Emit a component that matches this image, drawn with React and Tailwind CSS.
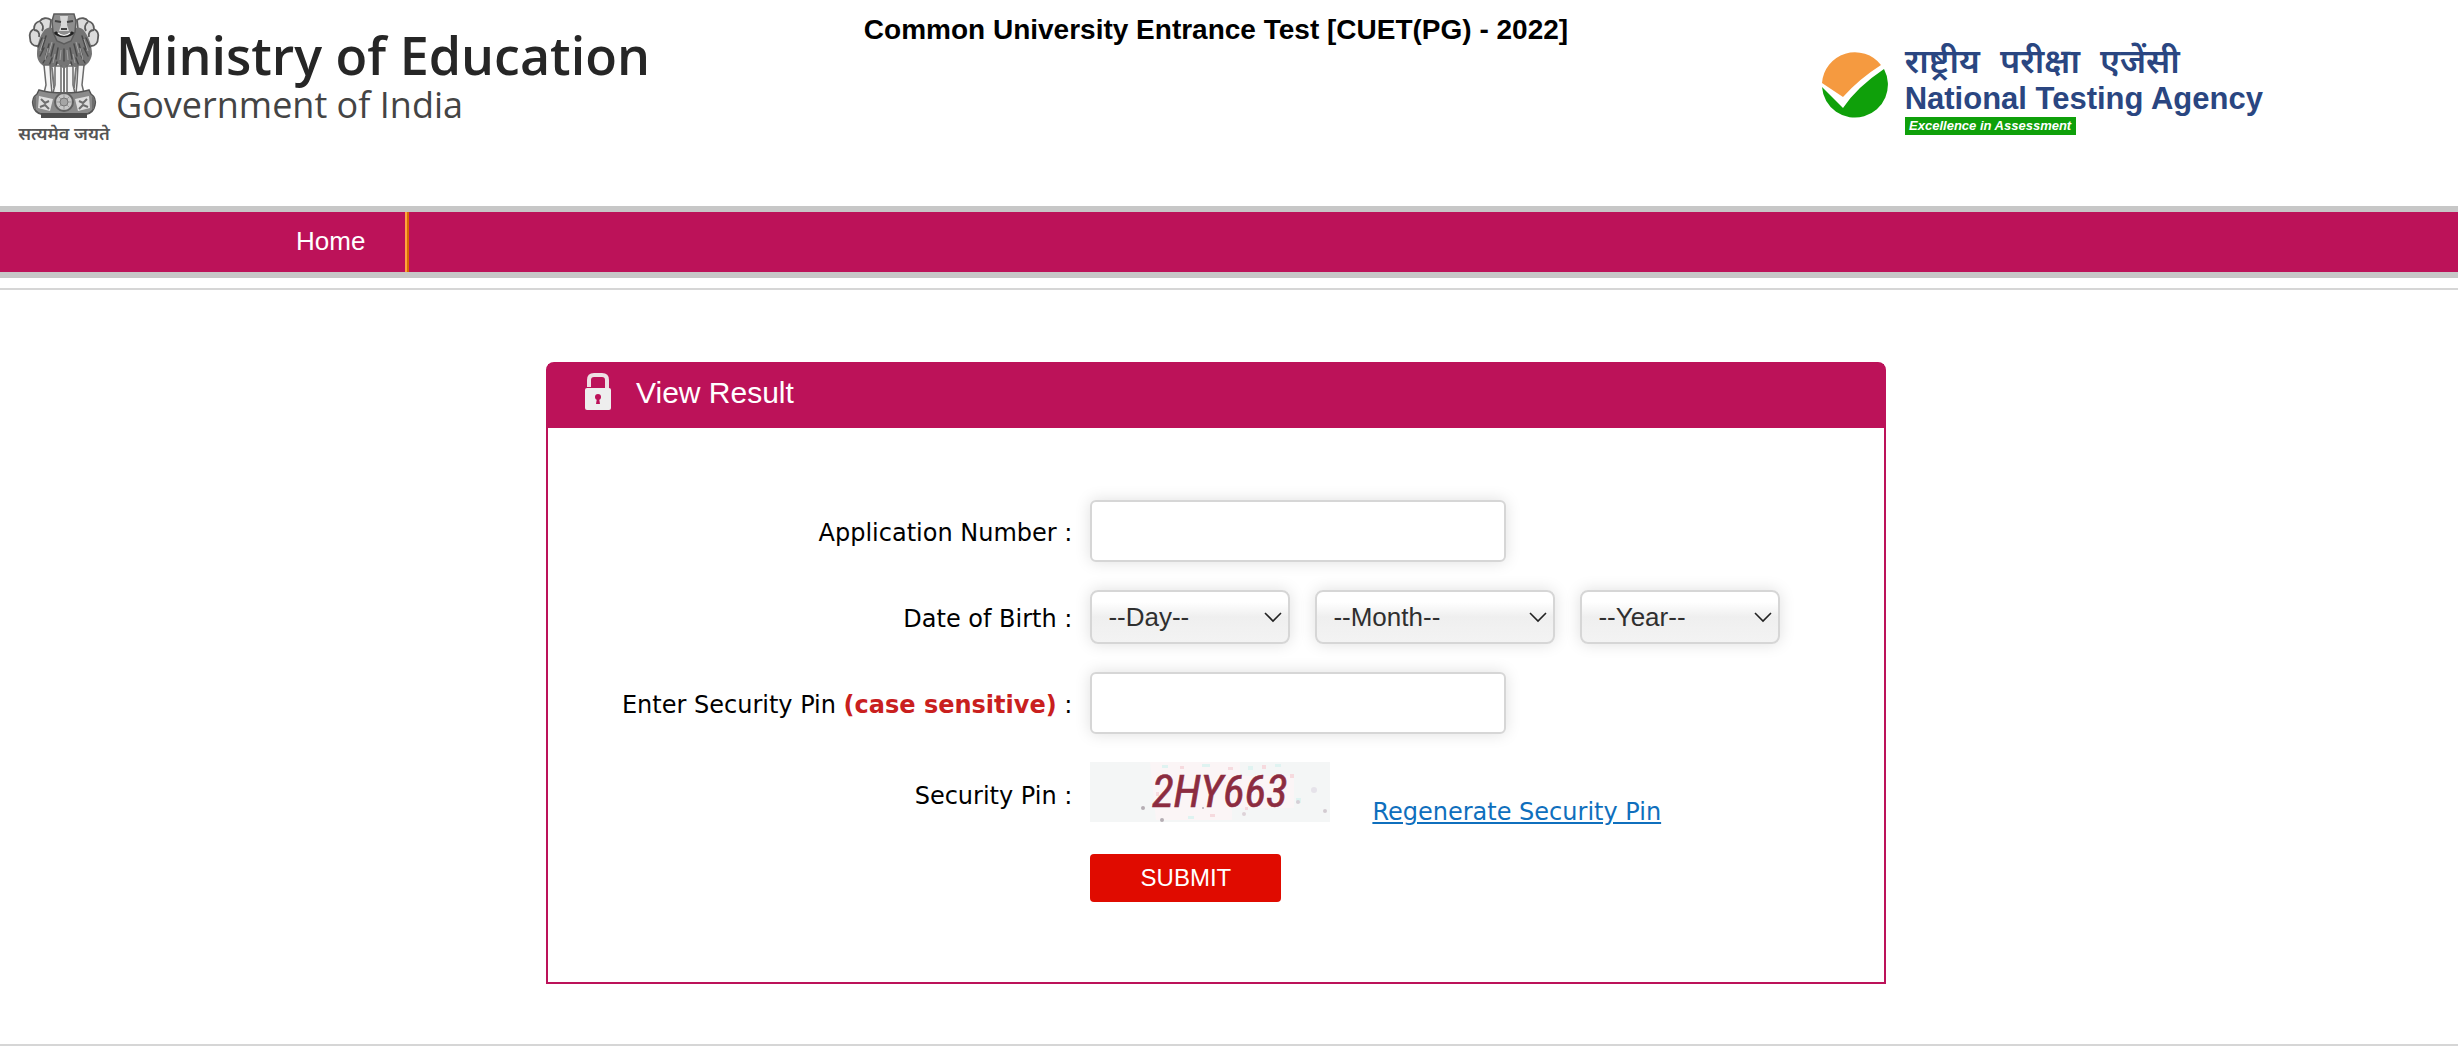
import { useState } from 'react';

const days = Array.from({ length: 31 }, (_, i) => String(i + 1).padStart(2, '0'));
const months = ['January', 'February', 'March', 'April', 'May', 'June', 'July', 'August', 'September', 'October', 'November', 'December'];
const years = Array.from({ length: 60 }, (_, i) => String(2005 - i));

const Emblem = () => (
  <svg viewBox="0 0 74 108" className="h-[108px] w-[74px]" aria-hidden="true">
    {/* side lions */}
    <g fill="#dcdcdc" stroke="#5c5c5c" strokeWidth="1.8">
      <path d="M24 8c-4-3-9-2-11 1-4 1-6 4-6 8-4 2-5 5-4 9 0 5 3 8 7 8l12-6z" />
      <path d="M50 8c4-3 9-2 11 1 4 1 6 4 6 8 4 2 5 5 4 9 0 5-3 8-7 8l-12-6z" />
      <path d="M13 10c3 2 4 6 2 9M7 18c4 0 6 3 5 7M61 10c-3 2-4 6-2 9M67 18c-4 0-6 3-5 7" fill="none" />
    </g>
    {/* manes */}
    <path d="M16 20c4-6 10-5 12-2h18c2-3 8-4 12 2 4 6 7 14 7 22-1 7-5 11-9 13l-7 1-6-4-6 5-6-5-6 4-7-1c-5-3-8-7-8-13 0-8 2-16 6-22z" fill="#747474" />
    <g stroke="#484848" strokeWidth="1.4" fill="none" strokeLinecap="round">
      <path d="M15 26l-4 9M19 24l-4 13M17 36l-4 8M22 32l-3 11M20 44l-4 7M27 32l-3 12M25 46l-3 8M31 36l-2 11M30 50l-1 4M37 37v12M43 36l2 11M44 50l1 4M47 32l3 12M49 46l3 8M52 32l3 11M54 44l4 7M55 24l4 13M57 36l4 8M59 26l4 9" />
    </g>
    <g stroke="#a4a4a4" strokeWidth="1" fill="none">
      <path d="M17 27l-4 12M21 36l-3 12M25 30l-3 11M28 42l-2 9M34 38l-1 10M40 38l1 10M46 42l2 9M49 30l3 11M53 36l3 12M57 27l4 12" />
    </g>
    {/* centre head */}
    <path d="M27 2h20l2 7-1 11-4 9-7 3-7-3-4-9-1-11z" fill="#8e8e8e" stroke="#5c5c5c" strokeWidth="1.5" />
    <path d="M33 4h8l-1 9 2 6h-10l2-6z" fill="#d8d8d8" />
    <path d="M28 9l6 1M46 9l-6 1M34 17h6" stroke="#444" strokeWidth="2" />
    <path d="M28 20c3 5 15 5 18 0" stroke="#222" strokeWidth="3" fill="none" />
    <path d="M31 21c3 3 9 3 12 0" stroke="#f2f2f2" strokeWidth="1.5" fill="none" />
    {/* legs */}
    <g fill="#f4f4f4" stroke="#6a6a6a" strokeWidth="1.5">
      <path d="M17 53h6l1 18 1 10h-8l2-8z" />
      <path d="M51 53h6l-2 20 2 8h-8l1-10z" />
      <path d="M28 54h6v27h-8l2-8z" />
      <path d="M40 54h6v19l2 8h-8z" />
    </g>
    <path d="M25 56l2 20M37 53v27M49 56l-2 20" stroke="#777" strokeWidth="2" />
    {/* abacus */}
    <path d="M12 78c12 4 38 4 50 0l2 4c3 2 5 6 4 11-1 5-4 8-8 9H14c-4-1-7-4-8-9-1-5 1-9 4-11z" fill="#8b8b8b" stroke="#555" strokeWidth="1.5" />
    <path d="M12 84l14 3-3 12-12-3z M62 84l-14 3 3 12 12-3z" fill="#dedede" />
    <path d="M14 87l4 4 4-2M13 95l5-2 4 4M60 87l-4 4-4-2M61 95l-5-2-4 4M8 85v12M66 85v12" stroke="#6e6e6e" strokeWidth="2" fill="none" />
    <circle cx="37" cy="90" r="9" fill="#c6c6c6" stroke="#606060" strokeWidth="2" />
    <path d="M37 82v16M29 90h16M31 84l12 12M43 84l-12 12" stroke="#9b9b9b" strokeWidth="1" />
    <circle cx="37" cy="90" r="4" fill="#a5a5a5" stroke="#777" />
    <path d="M14 101h46v5H14z" fill="#4d4d4d" />
  </svg>
);

const AgencyMark = () => (
  <svg viewBox="0 0 68 68" className="h-[68px] w-[68px]" aria-hidden="true">
    <path d="M1 32A33 33 0 0 1 60 14Q38 28 22 46Z" fill="#f59a40" />
    <path d="M1 36L22 57Q36 36 63 18A33 33 0 1 1 1 36Z" fill="#0fa00a" />
  </svg>
);

const LockIcon = () => (
  <svg viewBox="0 0 28 38" className="h-[38px] w-7" aria-hidden="true">
    <path d="M5 15V8q0-5 5-5h8q5 0 5 5v9" fill="none" stroke="#eedfe4" strokeWidth="4" />
    <rect x="1" y="16" width="26" height="22" rx="2" fill="#eeeeee" />
    <circle cx="14" cy="25" r="3" fill="#bc1259" />
    <path d="M13 26h2l1 6h-4z" fill="#bc1259" />
  </svg>
);

const Select = ({ id, label, placeholder, options, className }) => (
  <div className={`relative h-[54px] ${className}`}>
    <select
      id={id}
      aria-label={label}
      defaultValue=""
      className="h-full w-full appearance-none rounded-lg border-2 border-[#d6d6d6] bg-linear-to-b from-white from-20% via-[#efefef] via-50% to-[#f3f3f3] pl-4 pr-8 font-['Liberation_Sans',Arial,sans-serif] text-[26px] leading-8 text-[#2f2f2f] shadow-[0_0_16px_rgba(0,0,0,0.13)]"
    >
      <option value="">{placeholder}</option>
      {options.map((o) => (
        <option key={o} value={o}>{o}</option>
      ))}
    </select>
    <svg viewBox="0 0 18 12" className="pointer-events-none absolute right-2 top-[21px] h-3 w-[18px]" aria-hidden="true">
      <path d="M1 2l8 8 8-8" fill="none" stroke="#222" strokeWidth="1.6" />
    </svg>
  </div>
);

const Row = ({ label, htmlFor, children }) => (
  <div className="grid grid-cols-[2fr_3fr] items-center">
    <label htmlFor={htmlFor} className="pr-[10px] pt-1 text-right">{label}</label>
    <div className="pl-2">{children}</div>
  </div>
);

const inputClass =
  'block h-[62px] w-full max-w-[416px] rounded-md border-2 border-[#d6d6d6] bg-white px-4 shadow-[0_0_16px_rgba(0,0,0,0.13)]';

const Captcha = () => (
  <svg viewBox="0 0 240 60" className="h-[60px] w-[240px]" role="img" aria-label="Security pin 2HY663">
    <rect width="240" height="60" fill="#f4f6f6" />
    <path d="M60 0h90v14h54v32h-62v12H66z" fill="#fbf5f6" />
    <g fill="#dff3f1">
      <path d="M72 3h6v3h-6zM112 2h8v3h-8zM158 4h5v4h-5zM185 2h6v3h-6zM98 54h6v3h-6zM206 36h5v5h-5z" />
    </g>
    <g fill="#f6dade">
      <path d="M90 4h4v3h-4zM138 5h5v3h-5zM172 3h4v4h-4zM66 30h3v4h-3zM120 52h5v3h-5zM200 12h4v4h-4zM155 45h3v3h-3z" />
    </g>
    <g fill="#b5aeb4">
      <circle cx="53" cy="46" r="2" />
      <circle cx="72" cy="58" r="2" />
      <circle cx="113" cy="46" r="1" />
      <circle cx="208" cy="40" r="2" fill="#d6cfd6" />
      <circle cx="224" cy="28" r="3" fill="#e6e3ea" />
      <circle cx="235" cy="49" r="2" fill="#d3cbd1" />
      <circle cx="154" cy="52" r="2" fill="#ddd3d8" />
    </g>
    <text x="62" y="45" fill="#8c2c40" stroke="#8c2c40" strokeWidth="0.6" className="font-['Liberation_Sans_Narrow','Roboto_Condensed','Roboto',sans-serif] text-[45px] italic">2HY663</text>
  </svg>
);

export default function App() {
  const [applicationNumber, setApplicationNumber] = useState('');
  const [pin, setPin] = useState('');

  return (
    <div className="bg-white font-['Liberation_Sans',Arial,sans-serif] text-black">
      <header className="grid h-[206px] grid-cols-3 items-start">
        <div className="flex pl-4">
          <div className="flex w-24 flex-col items-center pt-3">
            <Emblem />
            <span className="whitespace-nowrap pt-1 font-['Noto_Sans_Devanagari','Noto_Sans',sans-serif] text-[18px] font-semibold leading-6 text-[#555]">सत्यमेव जयते</span>
          </div>
          <div className="whitespace-nowrap pl-1 pt-[22px] font-['Open_Sans','Noto_Sans',sans-serif]">
            <div className="text-[52px] font-semibold leading-[65px] text-[#262626]">Ministry of Education</div>
            <div className="text-[36px] leading-9 text-[#444]">Government of India</div>
          </div>
        </div>
        <h1 className="whitespace-nowrap pr-[26px] pt-[14px] text-center text-[28px] font-bold leading-8">Common University Entrance Test [CUET(PG) - 2022]</h1>
        <div className="flex pl-[182px] pt-[42px]">
          <div className="pt-[9px]">
            <AgencyMark />
          </div>
          <div className="whitespace-nowrap pl-4 pt-2 text-[#2a4681]">
            <div className="flex gap-5 font-['Noto_Sans_Devanagari','Noto_Sans',sans-serif] text-[34px] font-semibold leading-[31px]">
              <span>राष्ट्रीय</span>
              <span>परीक्षा</span>
              <span>एजेंसी</span>
            </div>
            <div className="text-[31px] font-bold leading-9">National Testing Agency</div>
            <div className="w-[171px] bg-[#0fa00a] text-center text-[13px] font-bold italic leading-[18px] text-white">Excellence in Assessment</div>
          </div>
        </div>
      </header>

      <nav className="flex border-y-[6px] border-[#c7c7c7] bg-[#bc1259] pl-64">
        <a href="#home" className="block h-[60px] border-r-2 border-[#ffa33f] px-10 text-[26px] leading-[58px] text-white">Home</a>
        <span className="h-[60px] w-[2px] bg-[#d96c00]" />
      </nav>
      <hr className="mt-[10px] border-t-2 border-[#d6d6d6]" />

      <main className="pl-6 pr-[50px] pt-[72px]">
        <section className="mx-auto w-full max-w-[1340px] rounded-t-lg border-2 border-[#bc1259]">
          <h2 className="flex h-16 items-start bg-[#bc1259] pl-9 pt-2 text-[30px] font-normal leading-[42px] text-white">
            <LockIcon />
            <span className="pl-6">View Result</span>
          </h2>
          <form
            className="flex flex-col gap-7 pb-20 pt-[72px] font-['DejaVu_Sans',Verdana,sans-serif] text-[24px] leading-8"
            onSubmit={(e) => e.preventDefault()}
          >
            <Row label="Application Number :" htmlFor="application-number">
              <input id="application-number" type="text" value={applicationNumber} onChange={(e) => setApplicationNumber(e.target.value)} className={inputClass} />
            </Row>
            <Row label="Date of Birth :" htmlFor="day">
              <div className="flex gap-[25px]">
                <Select id="day" label="Day" placeholder="--Day--" options={days} className="w-[200px]" />
                <Select id="month" label="Month" placeholder="--Month--" options={months} className="w-[240px]" />
                <Select id="year" label="Year" placeholder="--Year--" options={years} className="w-[200px]" />
              </div>
            </Row>
            <Row
              label={<>Enter Security Pin <b className="text-[#c9201e]">(case sensitive)</b> :</>}
              htmlFor="pin"
            >
              <input id="pin" type="text" value={pin} onChange={(e) => setPin(e.target.value)} className={inputClass} />
            </Row>
            <div className="-mb-[2px] grid grid-cols-[2fr_3fr] items-center">
              <span className="pr-[10px] pt-[2px] text-right">Security Pin :</span>
              <div className="flex items-start gap-[42px] pl-2">
                <Captcha />
                <a href="#regenerate" className="pt-[34px] text-[#0f6fbd] underline">Regenerate Security Pin</a>
              </div>
            </div>
            <div className="grid grid-cols-[2fr_3fr]">
              <div className="col-start-2 pl-2">
                <button type="submit" className="block h-12 w-[191px] rounded bg-[#e00b00] font-['Liberation_Sans',Arial,sans-serif] text-[24px] text-white">SUBMIT</button>
              </div>
            </div>
          </form>
        </section>
      </main>
      <hr className="mt-[60px] border-t-2 border-[#d6d6d6]" />
    </div>
  );
}
